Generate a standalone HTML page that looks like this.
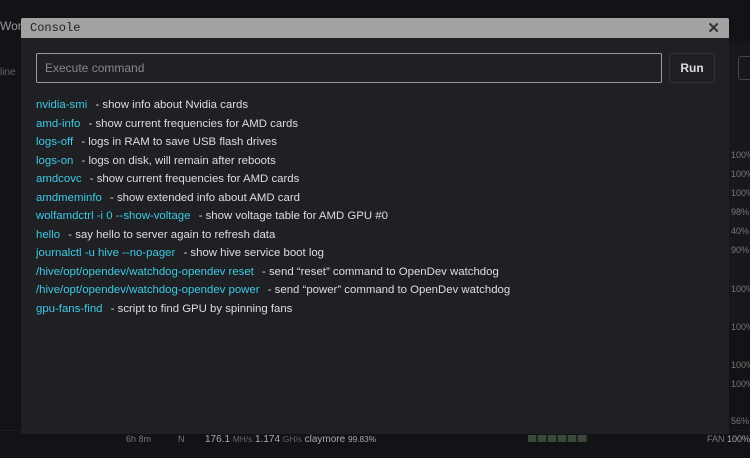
<!DOCTYPE html>
<html><head><style>
body{margin:0;width:750px;height:458px;background:#121316;overflow:hidden;position:relative;font-family:"Liberation Sans",sans-serif}
.bgrow{position:absolute;left:0;width:750px;height:18px;border-top:1px solid #1c1d21}
.pct{position:absolute;left:731px;font-size:9px;color:#777;white-space:nowrap}
.modal{position:absolute;left:21px;top:18px;width:708px;height:416px;background:#1f2024}
.hdr{height:20px;background:#a2a2a2;border-radius:2px 2px 0 0;position:relative}
.hdr span{position:absolute;left:9px;top:3px;font-family:"Liberation Mono",monospace;font-size:12px;color:#222}
.x{position:absolute;right:9px;top:1px;font-size:15px;color:#333;font-weight:bold}
.inp{position:absolute;left:15px;top:35px;width:626px;height:30px;border:1px solid #9a9a9a;border-radius:2px;color:#888;font-size:12px;line-height:28px;padding-left:8px;box-sizing:border-box}
.run{position:absolute;left:648px;top:35px;width:46px;height:30px;border:1px solid #333;border-radius:2px;color:#ddd;font-weight:bold;font-size:12px;text-align:center;line-height:28px;box-sizing:border-box}
.lines{position:absolute;left:15px;top:78px;font-size:11.4px;line-height:18.5px;color:#ddd;white-space:nowrap}
.c{color:#3ec9e4;margin-right:5px}
</style></head><body>
<div style="position:absolute;left:0;top:19px;font-size:12px;color:#999">Work</div>
<div style="position:absolute;left:0;top:67px;font-size:10px;color:#666">line</div>
<div style="position:absolute;left:729px;top:43px;width:21px;height:280px;background:#17181b"></div>
<div style="position:absolute;left:738px;top:56px;width:14px;height:22px;border:1px solid #444;border-radius:3px"></div>
<div class="pct" style="top:150px">100%</div><div class="pct" style="top:169px">100%</div><div class="pct" style="top:188px">100%</div><div class="pct" style="top:207px">98%</div><div class="pct" style="top:226px">40%</div><div class="pct" style="top:245px">90%</div><div class="pct" style="top:284px">100%</div><div class="pct" style="top:322px">100%</div><div class="pct" style="top:360px">100%</div><div class="pct" style="top:379px">100%</div><div class="pct" style="top:416px">56%</div>
<div class="bgrow" style="top:430px"></div>
<div style="position:absolute;top:434px;left:0;width:750px;font-size:9px;color:#777;white-space:nowrap">
<span style="position:absolute;left:126px">6h 8m</span><span style="position:absolute;left:178px">N</span>
<span style="position:absolute;left:205px;color:#aaa;font-size:10px">176.1 <small style="color:#666">MH/s</small> 1.174 <small style="color:#666">GH/s</small> claymore <small>99.83%</small></span>
<span style="position:absolute;left:528px;top:1px;width:60px;height:7px;background:repeating-linear-gradient(90deg,#3a4a3a 0 8px,#222 8px 10px)"></span>
<span style="position:absolute;left:707px">FAN <span style="color:#aaa">100%</span></span></div>
<div class="modal">
<div class="hdr"><span>Console</span><div class="x">✕</div></div>
<div class="inp">Execute command</div>
<div class="run">Run</div>
<div class="lines">
<div><span class="c">nvidia-smi</span> - show info about Nvidia cards</div>
<div><span class="c">amd-info</span> - show current frequencies for AMD cards</div>
<div><span class="c">logs-off</span> - logs in RAM to save USB flash drives</div>
<div><span class="c">logs-on</span> - logs on disk, will remain after reboots</div>
<div><span class="c">amdcovc</span> - show current frequencies for AMD cards</div>
<div><span class="c">amdmeminfo</span> - show extended info about AMD card</div>
<div><span class="c">wolfamdctrl -i 0 --show-voltage</span> - show voltage table for AMD GPU #0</div>
<div><span class="c">hello</span> - say hello to server again to refresh data</div>
<div><span class="c">journalctl -u hive --no-pager</span> - show hive service boot log</div>
<div><span class="c">/hive/opt/opendev/watchdog-opendev reset</span> - send “reset” command to OpenDev watchdog</div>
<div><span class="c">/hive/opt/opendev/watchdog-opendev power</span> - send “power” command to OpenDev watchdog</div>
<div><span class="c">gpu-fans-find</span> - script to find GPU by spinning fans</div>
</div>
</div>
</body></html>
